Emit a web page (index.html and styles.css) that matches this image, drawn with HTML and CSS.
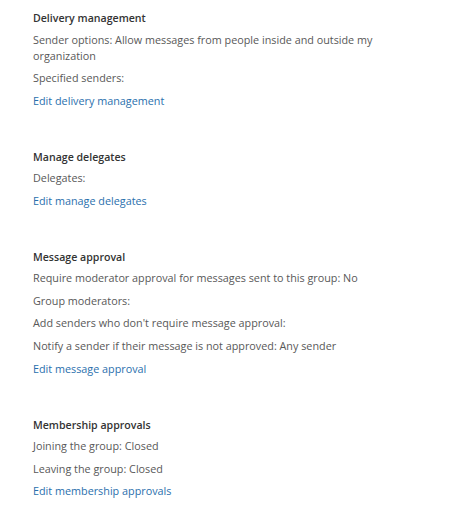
FILE: index.html
```html
<!DOCTYPE html>
<html lang="en">
<head>
<meta charset="utf-8">
<title>Group settings</title>
<link rel="stylesheet" href="styles.css">
</head>
<body>
<main class="page">
  <section class="group">
    <h2 class="group-title">Delivery management</h2>
    <p class="item">Sender options: Allow messages from people inside and outside my organization</p>
    <p class="item">Specified senders:</p>
    <a class="item link" href="#">Edit delivery management</a>
  </section>
  <section class="group">
    <h2 class="group-title">Manage delegates</h2>
    <p class="item">Delegates:</p>
    <a class="item link" href="#">Edit manage delegates</a>
  </section>
  <section class="group">
    <h2 class="group-title">Message approval</h2>
    <p class="item">Require moderator approval for messages sent to this group: No</p>
    <p class="item">Group moderators:</p>
    <p class="item">Add senders who don't require message approval:</p>
    <p class="item">Notify a sender if their message is not approved: Any sender</p>
    <a class="item link" href="#">Edit message approval</a>
  </section>
  <section class="group">
    <h2 class="group-title">Membership approvals</h2>
    <p class="item">Joining the group: Closed</p>
    <p class="item">Leaving the group: Closed</p>
    <a class="item link" href="#">Edit membership approvals</a>
  </section>
</main>
</body>
</html>
```
FILE: styles.css
```css
html, body {
  margin: 0;
  padding: 0;
  background: #ffffff;
}
body {
  font-family: "Segoe UI", "Open Sans", "Noto Sans", sans-serif;
  font-size: 10.8px;
  color: #585858;
}
.page {
  display: flex;
  flex-direction: column;
  gap: 40px;
  padding: 10.4px 0 0 33px;
  width: 362px;
}
.group {
  display: flex;
  flex-direction: column;
  align-items: flex-start;
  gap: 6.7px;
}
.group-title {
  margin: 0 0 -1.5px 0;
  font-size: 10.6px;
  font-weight: 600;
  line-height: 16px;
  color: #333333;
}
.item {
  margin: 0;
  line-height: 16px;
}
.link {
  color: #2a6fad;
  text-decoration: none;
}
```
